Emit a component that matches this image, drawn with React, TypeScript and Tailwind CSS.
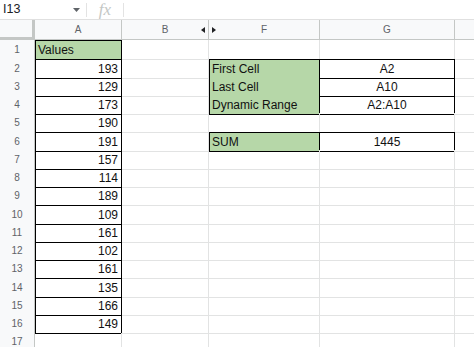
import React from 'react';

const values = [193, 129, 173, 190, 191, 157, 114, 189, 109, 161, 102, 161, 135, 166, 149];

const lookup: Record<number, [string, string]> = {
  2: ['First Cell', 'A2'],
  3: ['Last Cell', 'A10'],
  4: ['Dynamic Range', 'A2:A10'],
  6: ['SUM', '1445'],
};

const cols = 'grid grid-cols-[35px_87px_87px_111px_135px_1fr]';
const grid = 'border-r border-b border-[#e2e3e3]';
const head = 'bg-[#f8f9fa] border-r border-b border-[#c4c7c5] text-[10px] text-[#5f6368] flex items-center justify-center';

function FormulaBar() {
  return (
    <div className="h-[20px] flex items-center border-b border-[#e0e0e0] bg-white">
      <div className="w-[86px] flex items-center justify-between pl-[3px] pr-[6px]">
        <span className="text-[12.5px] text-[#202124]">I13</span>
        <svg width="7" height="4" viewBox="0 0 7 4"><path d="M0 0h7L3.5 4z" fill="#5f6368" /></svg>
      </div>
      <div className="w-px h-[14px] bg-[#e3e3e3]" />
      <div className="w-[36px] flex justify-center">
        <span className="font-['Liberation_Serif',serif] italic text-[17px] leading-none text-[#c4c7c5]">fx</span>
      </div>
      <div className="w-px h-[14px] bg-[#e3e3e3]" />
    </div>
  );
}

function ColumnHeader() {
  return (
    <div className={`${cols} h-[20.3px]`}>
      <div className="bg-[#f8f9fa] border-r-[3px] border-b-[3px] border-[#c4c7c5]" />
      <div className={head}>A</div>
      <div className={`${head} relative`}>
        B
        <svg className="absolute right-[3px] top-[7px]" width="4" height="6" viewBox="0 0 4 6"><path d="M4 0v6L0 3z" fill="#202124" /></svg>
      </div>
      <div className={`${head} relative`}>
        <svg className="absolute left-[3px] top-[7px]" width="4" height="6" viewBox="0 0 4 6"><path d="M0 0v6l4-3z" fill="#202124" /></svg>
        F
      </div>
      <div className={head}>G</div>
      <div className={`${head} border-r-0`} />
    </div>
  );
}

function Row({ n }: { n: number }) {
  const a = n === 1 ? 'Values' : values[n - 2];
  const inA = n <= 16;
  const info = lookup[n];
  const topEdge = n === 2 || n === 6;

  return (
    <div className={`${cols} h-[18.27px] text-[12px] text-[#111]`}>
      <div className={`${head} ${n === 13 ? 'bg-[#e8eaed]' : ''}`}>{n}</div>
      <div
        className={`border-r border-b flex items-center px-[3px] pt-[1px] ${
          inA
            ? `border-black ${n === 1 ? 'shadow-[inset_1px_1px_0_#000] bg-[#b6d7a8]' : 'shadow-[inset_1px_0_0_#000] justify-end'}`
            : 'border-[#e2e3e3]'
        }`}
      >
        {inA ? a : ''}
      </div>
      <div className={grid} />
      <div
        className={`border-r border-b flex items-center px-[3px] pt-[1px] ${
          info
            ? `border-black bg-[#b6d7a8] ${topEdge ? 'shadow-[inset_1px_1px_0_#000]' : 'shadow-[inset_1px_0_0_#000]'}`
            : 'border-[#e2e3e3]'
        }`}
      >
        {info?.[0]}
      </div>
      <div
        className={`border-r border-b flex items-center justify-center pt-[1px] ${
          info ? `border-black ${topEdge ? 'shadow-[inset_0_1px_0_#000]' : ''}` : 'border-[#e2e3e3]'
        }`}
      >
        {info?.[1]}
      </div>
      <div className="border-b border-[#e2e3e3]" />
    </div>
  );
}

export default function App() {
  return (
    <div className="w-[474px] h-[347px] overflow-hidden bg-white font-['Liberation_Sans',Arial,sans-serif]">
      <FormulaBar />
      <ColumnHeader />
      {Array.from({ length: 17 }, (_, i) => (
        <Row key={i} n={i + 1} />
      ))}
    </div>
  );
}
